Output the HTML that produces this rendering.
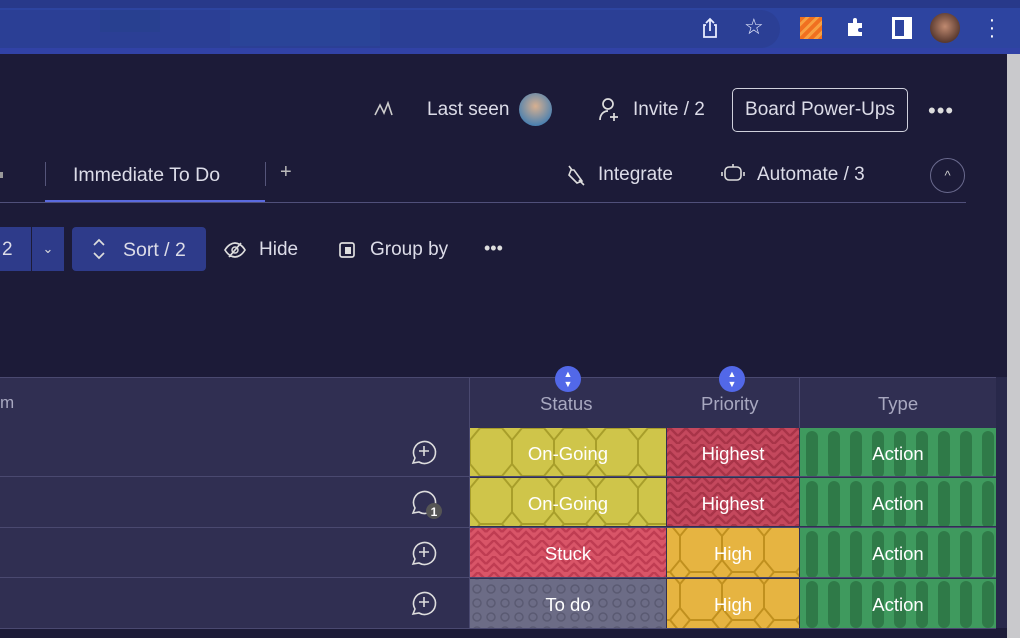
<!DOCTYPE html>
<html><head><meta charset="utf-8"><style>
*{margin:0;padding:0;box-sizing:border-box}
body{width:1020px;height:638px;overflow:hidden;background:#1c1b38;font-family:"Liberation Sans",sans-serif;color:#e6e6f0;position:relative}
.a{position:absolute}
.t{font-size:19px;color:#dcdce8;white-space:nowrap}
.hl{position:absolute;left:0;width:996px;height:1px;background:#4a4970}
</style></head><body>
<div class="a" style="left:0;top:0;width:1020px;height:54px;background:#2d44a0"></div>
<div class="a" style="left:0;top:0;width:1020px;height:8px;background:#28398a"></div>
<div class="a" style="left:0;top:10px;width:780px;height:38px;background:#2b3f95;border-radius:0 20px 20px 0"></div>
<div class="a" style="left:100px;top:10px;width:60px;height:22px;background:#284090"></div>
<div class="a" style="left:230px;top:10px;width:150px;height:36px;background:#2a4498"></div>
<div class="a" style="left:0;top:48px;width:1020px;height:6px;background:#3142a6"></div>
<svg class="a" style="left:700px;top:16px" width="20" height="24" viewBox="0 0 20 24"><path d="M6 9H4v12h12V9h-2M10 15V3M6 7l4-4 4 4" fill="none" stroke="#e8ecff" stroke-width="1.8"/></svg>
<div class="a" style="left:744px;top:14px;font-size:22px;color:#e8ecff">☆</div>
<div class="a" style="left:800px;top:17px;width:22px;height:22px;background:repeating-linear-gradient(135deg,#f07020 0 4px,#f8a040 4px 7px)"></div>
<svg class="a" style="left:845px;top:16px" width="22" height="22" viewBox="0 0 22 22"><path d="M3 7h5V4a2 2 0 014 0v3h5v5h-2a2 2 0 000 4h2v4H3z" fill="#fff"/></svg>
<div class="a" style="left:892px;top:17px;width:20px;height:22px;border:3px solid #fff;border-right-width:8px"></div>
<div class="a" style="left:930px;top:13px;width:30px;height:30px;border-radius:50%;background:radial-gradient(circle at 50% 45%,#c08a70,#5a3a30 70%)"></div>
<div class="a" style="left:988px;top:16px;font-size:20px;line-height:8px;color:#fff;width:8px;text-align:center">·<br>·<br>·</div>
<div class="a" style="left:1007px;top:54px;width:13px;height:584px;background:#c9c9cc"></div>
<svg class="a" style="left:374px;top:101px" width="20" height="16" viewBox="0 0 20 16"><path d="M1 14l5-10 4 8 4-10 4 12" fill="none" stroke="#ccc" stroke-width="1.6"/></svg>
<div class="a t" style="left:427px;top:99px">Last seen</div>
<div class="a" style="left:519px;top:93px;width:33px;height:33px;border-radius:50%;background:radial-gradient(circle at 50% 40%,#d8b090,#4a80b0 75%)"></div>
<svg class="a" style="left:598px;top:97px" width="24" height="26" viewBox="0 0 24 26"><circle cx="10" cy="7" r="5" fill="none" stroke="#ddd" stroke-width="1.7"/><path d="M2 23c0-6 4-9 8-9M16 16v8M12 20h8" fill="none" stroke="#ddd" stroke-width="1.7"/></svg>
<div class="a t" style="left:633px;top:99px">Invite / 2</div>
<div class="a t" style="left:732px;top:88px;width:176px;height:44px;border:1.5px solid #cfd0dc;border-radius:5px;display:flex;align-items:center;justify-content:center">Board Power-Ups</div>
<div class="a" style="left:928px;top:98px;font-size:22px;letter-spacing:1px;color:#ddd">•••</div>
<div class="a" style="left:0;top:172px;width:3px;height:6px;background:#999"></div>
<div class="a" style="left:45px;top:162px;width:1px;height:24px;background:#55557a"></div>
<div class="a t" style="left:73px;top:164px;font-size:19.5px">Immediate To Do</div>
<div class="a" style="left:265px;top:162px;width:1px;height:24px;background:#55557a"></div>
<div class="a" style="left:280px;top:161px;font-size:20px;color:#bbb">+</div>
<div class="a" style="left:45px;top:200px;width:220px;height:3px;background:#5a6ae0"></div>
<div class="a" style="left:0;top:202px;width:966px;height:1px;background:#50507a"></div>
<svg class="a" style="left:565px;top:163px" width="22" height="24" viewBox="0 0 22 24"><path d="M4 3l3 4M6 7l-2 5 8 8 5-2-8-11zM14 17l5 5" fill="none" stroke="#ddd" stroke-width="1.6"/></svg>
<div class="a t" style="left:598px;top:164px">Integrate</div>
<svg class="a" style="left:720px;top:162px" width="26" height="22" viewBox="0 0 26 22"><rect x="5" y="5" width="16" height="13" rx="4" fill="none" stroke="#ddd" stroke-width="1.6"/><path d="M13 5V2M2 10v4M24 10v4" stroke="#ddd" stroke-width="1.6"/></svg>
<div class="a t" style="left:757px;top:164px">Automate / 3</div>
<div class="a" style="left:930px;top:158px;width:35px;height:35px;border-radius:50%;border:1px solid #6a6a8e;color:#ccc;font-size:13px;display:flex;align-items:center;justify-content:center">^</div>
<div class="a" style="left:0;top:227px;width:31px;height:44px;background:#2e3b8a"></div>
<div class="a t" style="left:2px;top:239px">2</div>
<div class="a" style="left:31px;top:227px;width:33px;height:44px;background:#2e3b8a;border-left:1px solid #1c1b38;color:#ddd;font-size:13px;display:flex;align-items:center;justify-content:center">⌄</div>
<div class="a" style="left:72px;top:227px;width:134px;height:44px;background:#2e3b8a;border-radius:4px"></div>
<svg class="a" style="left:92px;top:237px" width="14" height="24" viewBox="0 0 14 24"><path d="M2 8l5-5 5 5M2 16l5 5 5-5" fill="none" stroke="#ddd" stroke-width="1.7"/></svg>
<div class="a t" style="left:123px;top:239px;font-size:19.5px">Sort / 2</div>
<svg class="a" style="left:223px;top:240px" width="24" height="20" viewBox="0 0 24 20"><path d="M2 10c3-5 7-7 10-7s7 2 10 7c-3 5-7 7-10 7s-7-2-10-7zM6 17L18 3" fill="none" stroke="#ddd" stroke-width="1.7"/><circle cx="12" cy="10" r="3" fill="none" stroke="#ddd" stroke-width="1.5"/></svg>
<div class="a t" style="left:259px;top:239px">Hide</div>
<svg class="a" style="left:338px;top:241px" width="18" height="18" viewBox="0 0 18 18"><rect x="2" y="2" width="14" height="14" rx="2" fill="none" stroke="#ddd" stroke-width="1.7"/><rect x="7" y="6" width="6" height="7" fill="#ddd"/></svg>
<div class="a t" style="left:370px;top:239px">Group by</div>
<div class="a" style="left:484px;top:238px;font-size:18px;color:#ddd">•••</div>
<div class="a" style="left:0;top:377px;width:996px;height:251px;background:#302f52"></div>
<div class="a" style="left:996px;top:377px;width:11px;height:251px;background:#28284a"></div>
<div class="hl" style="top:377px"></div>
<div class="hl" style="top:476px"></div>
<div class="hl" style="top:527px"></div>
<div class="hl" style="top:577px"></div>
<div class="hl" style="top:628px"></div>
<div class="a" style="left:469px;top:377px;width:1px;height:251px;background:#4a4970"></div>
<div class="a" style="left:799px;top:377px;width:1px;height:51px;background:#4a4970"></div>
<div class="a" style="left:0;top:393px;font-size:17px;color:#a8a8c0">m</div>
<div class="a" style="left:540px;top:393px;font-size:18.5px;color:#a8a8c0">Status</div>
<div class="a" style="left:701px;top:393px;font-size:18.5px;color:#a8a8c0">Priority</div>
<div class="a" style="left:878px;top:393px;font-size:18.5px;color:#a8a8c0">Type</div>
<div class="a" style="left:555px;top:366px;width:26px;height:26px;border-radius:50%;background:#5268e8;color:#fff;font-size:9px;line-height:10px;text-align:center;padding-top:3px">▲<br>▼</div>
<div class="a" style="left:719px;top:366px;width:26px;height:26px;border-radius:50%;background:#5268e8;color:#fff;font-size:9px;line-height:10px;text-align:center;padding-top:3px">▲<br>▼</div>
<svg width="0" height="0" style="position:absolute"><defs>
<pattern id="hy" width="42" height="48" patternUnits="userSpaceOnUse"><rect width="42" height="48" fill="#cfc54a"/><path d="M0 12L10 0h22l10 12v24L32 48H10L0 36z" fill="none" stroke="#a89e2a" stroke-width="2"/></pattern>
<pattern id="ho" width="42" height="48" patternUnits="userSpaceOnUse"><rect width="42" height="48" fill="#e6b441"/><path d="M0 12L10 0h22l10 12v24L32 48H10L0 36z" fill="none" stroke="#c0901e" stroke-width="2"/></pattern>
<pattern id="pr" width="16" height="16" patternUnits="userSpaceOnUse"><rect width="16" height="16" fill="#c4485d"/><path d="M0 16L8 8 16 16M0 8L8 0 16 8" fill="none" stroke="#a83448" stroke-width="2.5"/></pattern>
<pattern id="rd" width="16" height="16" patternUnits="userSpaceOnUse"><rect width="16" height="16" fill="#d95568"/><path d="M0 16L8 8 16 16M0 8L8 0 16 8" fill="none" stroke="#bf3c52" stroke-width="2.5"/></pattern>
<pattern id="gy" width="14" height="14" patternUnits="userSpaceOnUse"><rect width="14" height="14" fill="#6c6c86"/><circle cx="7" cy="7" r="4" fill="none" stroke="#5a5a72" stroke-width="1.5"/></pattern>
<pattern id="gr" width="22" height="50" patternUnits="userSpaceOnUse"><rect width="22" height="50" fill="#3f9a5e"/><rect x="6" y="3" width="12" height="47" rx="6" fill="#2f7a48"/></pattern>
</defs></svg>
<svg class="a" style="left:470px;top:428px" width="526" height="200">
<rect x="0" y="0" width="196" height="48" fill="url(#hy)"/>
<rect x="0" y="50" width="196" height="48" fill="url(#hy)"/>
<rect x="0" y="100" width="196" height="49" fill="url(#rd)"/>
<rect x="0" y="151" width="196" height="49" fill="url(#gy)"/>
<rect x="197" y="0" width="132" height="48" fill="url(#pr)"/>
<rect x="197" y="50" width="132" height="48" fill="url(#pr)"/>
<rect x="197" y="100" width="132" height="49" fill="url(#ho)"/>
<rect x="197" y="151" width="132" height="49" fill="url(#ho)"/>
<rect x="330" y="0" width="196" height="48" fill="url(#gr)"/>
<rect x="330" y="50" width="196" height="48" fill="url(#gr)"/>
<rect x="330" y="100" width="196" height="49" fill="url(#gr)"/>
<rect x="330" y="151" width="196" height="49" fill="url(#gr)"/>
<g font-family="Liberation Sans" font-size="18.5" fill="#fff" text-anchor="middle">
<text x="98" y="32">On-Going</text><text x="98" y="82">On-Going</text><text x="98" y="132">Stuck</text><text x="98" y="183">To do</text>
<text x="263" y="32">Highest</text><text x="263" y="82">Highest</text><text x="263" y="132">High</text><text x="263" y="183">High</text>
<text x="428" y="32">Action</text><text x="428" y="82">Action</text><text x="428" y="132">Action</text><text x="428" y="183">Action</text>
</g></svg>
<svg class="a" style="left:409px;top:437px" width="30" height="30" viewBox="0 0 30 30"><path d="M4 26l2-5A11 11 0 1 1 10 25z" fill="none" stroke="#ddd" stroke-width="1.6"/><path d="M15 9v10M10 14h10" stroke="#ddd" stroke-width="1.6"/></svg>
<svg class="a" style="left:409px;top:487px" width="36" height="36" viewBox="0 0 36 36"><path d="M4 26l2-5A11 11 0 1 1 10 25z" fill="none" stroke="#ddd" stroke-width="1.6"/><circle cx="25" cy="24" r="8" fill="#555"/><text x="25" y="29" font-size="12" font-family="Liberation Sans" font-weight="bold" fill="#fff" text-anchor="middle">1</text></svg>
<svg class="a" style="left:409px;top:538px" width="30" height="30" viewBox="0 0 30 30"><path d="M4 26l2-5A11 11 0 1 1 10 25z" fill="none" stroke="#ddd" stroke-width="1.6"/><path d="M15 9v10M10 14h10" stroke="#ddd" stroke-width="1.6"/></svg>
<svg class="a" style="left:409px;top:588px" width="30" height="30" viewBox="0 0 30 30"><path d="M4 26l2-5A11 11 0 1 1 10 25z" fill="none" stroke="#ddd" stroke-width="1.6"/><path d="M15 9v10M10 14h10" stroke="#ddd" stroke-width="1.6"/></svg>
</body></html>
